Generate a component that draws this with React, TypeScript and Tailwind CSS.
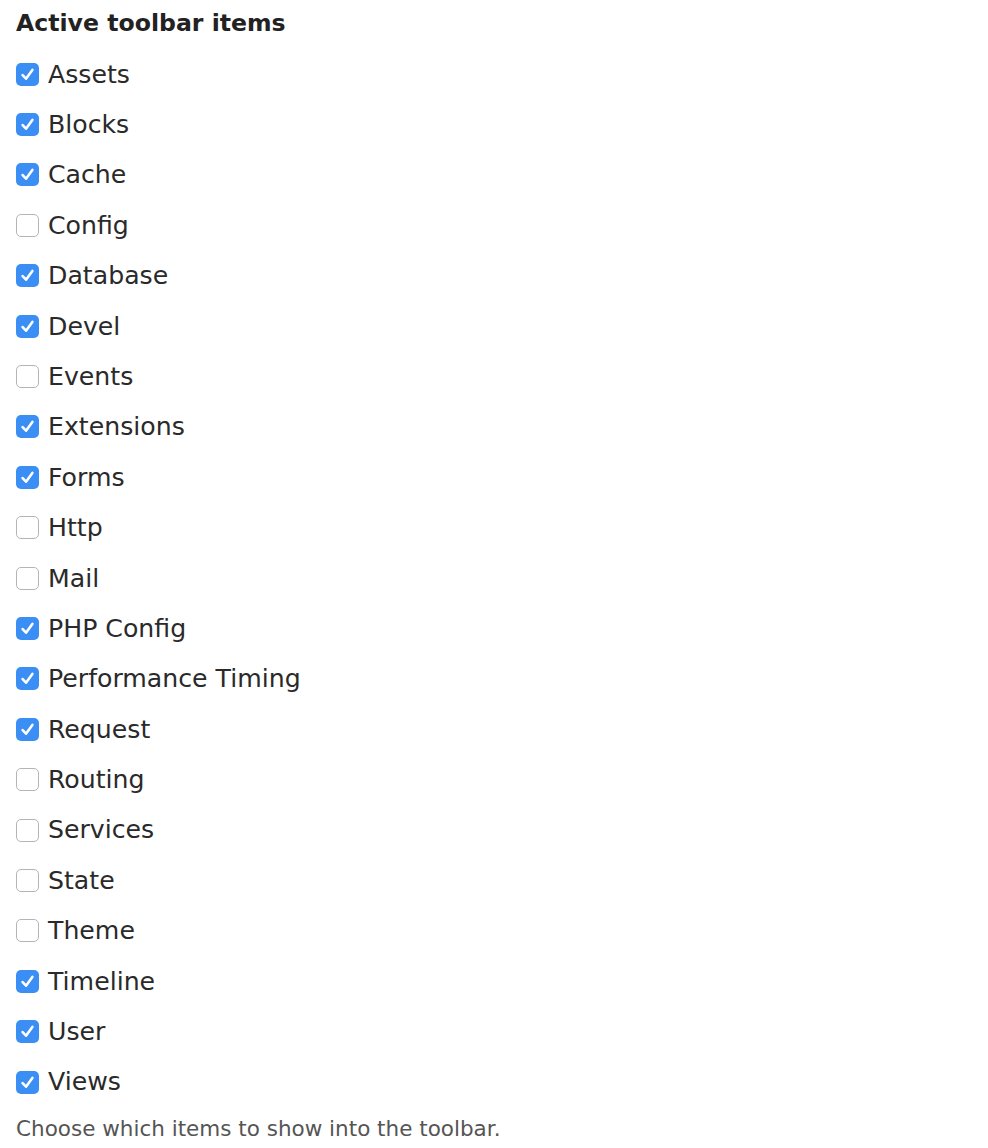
import React from 'react';

const items: [string, boolean][] = [
    ['Assets', true],
    ['Blocks', true],
    ['Cache', true],
    ['Config', false],
    ['Database', true],
    ['Devel', true],
    ['Events', false],
    ['Extensions', true],
    ['Forms', true],
    ['Http', false],
    ['Mail', false],
    ['PHP Config', true],
    ['Performance Timing', true],
    ['Request', true],
    ['Routing', false],
    ['Services', false],
    ['State', false],
    ['Theme', false],
    ['Timeline', true],
    ['User', true],
    ['Views', true],
];

const Box: React.FC<{ checked: boolean }> = ({ checked }) =>
    checked ? (
        <span className="flex h-[23px] w-[23px] shrink-0 items-center justify-center rounded-[5px] bg-[#3a8ef4]">
            <svg width="19" height="19" viewBox="0 0 14 14" fill="none">
                <path d="M3.4 7.4 L5.9 10.1 L10.6 3.6" stroke="white" strokeWidth="1.9" strokeLinecap="round" strokeLinejoin="round" />
            </svg>
        </span>
    ) : (
        <span className="h-[23px] w-[23px] shrink-0 rounded-[5px] border border-[#b5b5b5] bg-white" />
    );

export default function App() {
    return (
        <div className="bg-white px-4 pt-[6px] text-[#2a2a2a]" style={{ fontFamily: '"DejaVu Sans", Verdana, sans-serif' }}>
            <h2 className="text-[23.6px] font-bold leading-[34px] text-[#222]">Active toolbar items</h2>
            <div className="mt-[9px] flex flex-col">
                {items.map(([label, checked]) => (
                    <label key={label} className="flex h-[50.4px] items-center gap-[9px]">
                        <Box checked={checked} />
                        <span className="text-[25.2px] leading-none">{label}</span>
                    </label>
                ))}
            </div>
            <p className="mt-[6px] text-[21.5px] text-[#555]">Choose which items to show into the toolbar.</p>
        </div>
    );
}
